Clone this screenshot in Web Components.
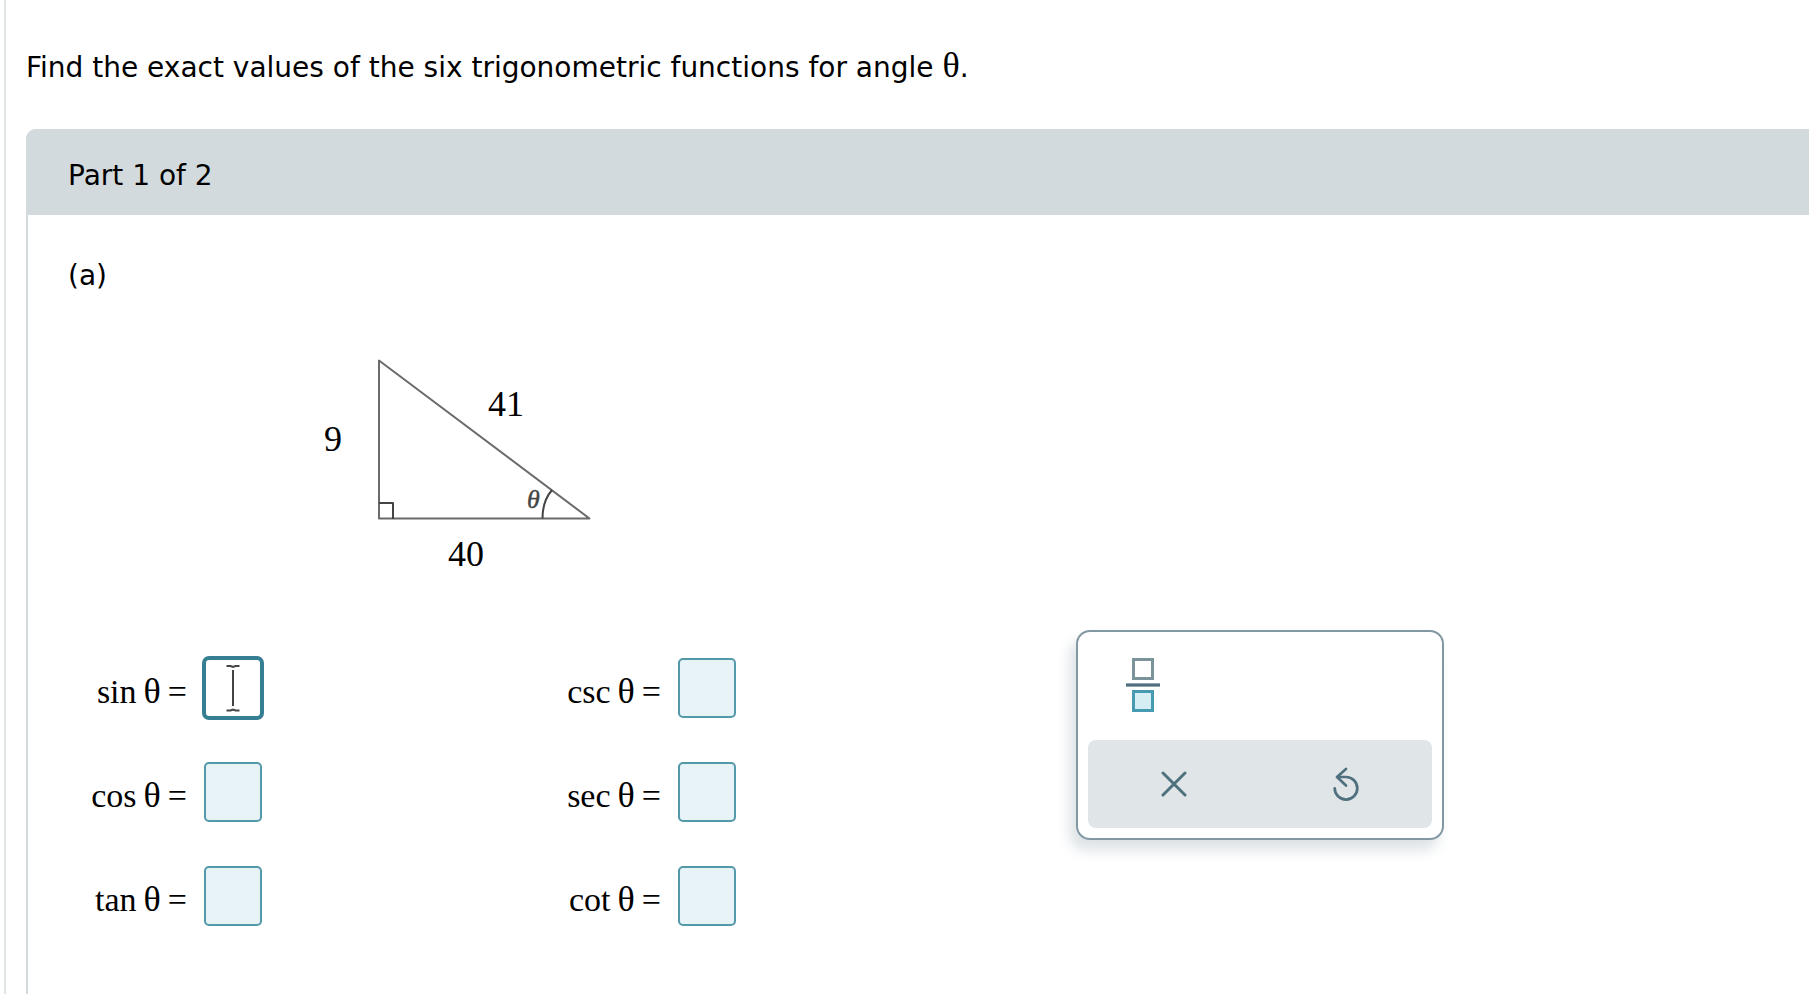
<!DOCTYPE html>
<html lang="en">
<head>
<meta charset="utf-8">
<title>Six trigonometric functions</title>
<style>
body { margin: 0; background: #fff; color: #000; font: 28px/36px "DejaVu Sans", sans-serif; }
</style>
</head>
<body>
<exercise-page>
  <span slot="question">Find the exact values of the six trigonometric functions for angle <math-symbol>θ</math-symbol>.</span>
  <question-part heading="Part 1 of 2" name="(a)">
    <triangle-figure slot="figure"></triangle-figure>
    <answer-grid>
      <trig-field fn="sin" active></trig-field>
      <trig-field fn="csc"></trig-field>
      <trig-field fn="cos"></trig-field>
      <trig-field fn="sec"></trig-field>
      <trig-field fn="tan"></trig-field>
      <trig-field fn="cot"></trig-field>
    </answer-grid>
    <math-keypad></math-keypad>
  </question-part>
</exercise-page>
<script>
const define = (name, html, setup) => customElements.define(name, class extends HTMLElement {
  connectedCallback() {
    if (this.shadowRoot) return;
    this.attachShadow({ mode: 'open' }).innerHTML = html;
    if (setup) setup(this, this.shadowRoot);
  }
});

define('math-symbol', `
<style>:host { display: inline; font: 36px/0 "Liberation Serif", serif; }</style><slot></slot>`);

define('exercise-page', `
<style>
:host { display: flex; flex-direction: column; box-sizing: border-box; min-height: 100vh; margin-left: 4px; padding: 50px 0 0 20px; border-left: 2px solid #e0e5e8; overflow: hidden; }
p { margin: 0 0 43px; }
main { flex: 1; display: flex; flex-direction: column; }
</style>
<p><slot name="question"></slot></p>
<main><slot></slot></main>`);

define('question-part', `
<style>
:host { flex: 1; display: block; border-left: 2px solid #d2dadd; border-radius: 10px 0 0 0; }
h2 { margin: 0 0 0 -2px; padding: 29px 42px 21px; font: inherit; background: #d2dadd; border-radius: 10px 0 0 0; }
section { padding: 43px 40px 40px; }
h3 { margin: 0 0 47px; font: inherit; }
.work { display: flex; align-items: flex-start; gap: 340px; margin-top: 39px; }
</style>
<h2></h2>
<section><h3></h3><slot name="figure"></slot><div class="work"><slot></slot></div></section>`,
(el, root) => {
  root.querySelector('h2').textContent = el.getAttribute('heading');
  root.querySelector('h3').textContent = el.getAttribute('name');
});

define('triangle-figure', `
<style>
:host { display: block; margin-left: 232px; }
svg { display: block; }
text { font: 36px "Liberation Serif", serif; }
.angle { font-size: 26px; font-style: italic; fill: #444; stroke: #444; stroke-width: .4; }
</style>
<svg width="320" height="250" viewBox="0 0 320 250" role="img" aria-label="Right triangle with legs 9 and 40 and hypotenuse 41">
<g fill="none" stroke="#6a6a6a" stroke-width="2" stroke-linejoin="round">
<path d="M79 19.500V177.500H289.500Z"/>
<path stroke="#444" d="M79 162H93V178M242.500 177.500C242.500 166 245.500 156.500 252 149"/>
</g>
<text x="24" y="110">9</text><text x="188" y="75">41</text><text x="148" y="225">40</text>
<text class="angle" x="227" y="167">θ</text>
</svg>`);

define('answer-grid', `
<style>:host { display: grid; grid-template-columns: auto auto; gap: 44px 280px; margin-top: 28px; }</style><slot></slot>`);

define('trig-field', `
<style>
:host { display: flex; align-items: center; gap: 17px; font: 34px/40px "Liberation Serif", serif; }
label { display: flex; align-items: baseline; justify-content: flex-end; gap: 7px; width: 119px; padding-top: 6px; }
.angle { font-size: 36px; }
.box { position: relative; display: flex; }
input { box-sizing: border-box; width: 58px; height: 60px; margin: 0; padding: 4px; border: 2px solid #5499a9; border-radius: 5px; background: #e8f3f8; font: inherit; text-align: center; outline: none; }
svg { display: none; position: absolute; left: 22px; top: 6px; }
:host([active]) input { background: #fff; border-color: #367f92; box-shadow: 0 0 0 2px #367f92; }
:host([active]) svg { display: block; }
</style>
<label for="value"><span class="fn"></span><span class="angle">θ</span><span>=</span></label>
<span class="box"><input id="value" type="text" autocomplete="off">
<svg width="14" height="48" viewBox="0 0 14 48" fill="none" stroke="#444" stroke-width="2" aria-hidden="true"><path d="M.5 2H4.500L7 3L9.500 2H13.500M7 6V42M.5 46.500H4.500L7 45.500L9.500 46.500H13.500"/></svg></span>`,
(el, root) => { root.querySelector('.fn').textContent = el.getAttribute('fn'); });

define('math-keypad', `
<style>
:host { display: block; box-sizing: border-box; width: 368px; padding: 10px; border: 2px solid #8299a3; border-radius: 14px; background: #fff; box-shadow: -6px 10px 14px #dce2e5; }
button { display: flex; margin: 0; padding: 0; border: 0; background: none; cursor: pointer; }
.keys { display: flex; height: 98px; box-sizing: border-box; padding: 16px 38px; }
.actions { display: grid; grid-template-columns: 1fr 1fr; height: 88px; border-radius: 8px; background: #e0e5e7; }
.actions button { align-items: center; justify-content: center; }
</style>
<div class="keys"><button type="button" aria-label="Fraction">
<svg width="34" height="54" viewBox="0 0 34 54"><path fill="#fff" stroke="#7b949c" stroke-width="3" d="M7.500 1.500h19v19h-19z"/><path fill="#8fa4ad" d="M0 25h34v4H0z"/><path fill="#4f707e" d="M0 26h34v2H0z"/><path fill="#d5eef3" stroke="#469ab2" stroke-width="3" d="M7.500 33.500h19v19h-19z"/></svg>
</button></div>
<div class="actions">
<button type="button" aria-label="Clear"><svg width="26" height="26" viewBox="0 0 26 26" fill="none" stroke="#4f707e" stroke-width="3" stroke-linecap="round"><path d="M2 2L24 24M24 2L2 24"/></svg></button>
<button type="button" aria-label="Undo"><svg width="28" height="34" viewBox="0 0 28 34" fill="none" stroke="#4f707e" stroke-width="2.700" stroke-linecap="round" stroke-linejoin="round"><path d="M14 2L5 10L14 18.500M5 10H14A11.300 11.300 0 1 1 2.700 21.300"/></svg></button>
</div>`);
</script>
</body>
</html>
